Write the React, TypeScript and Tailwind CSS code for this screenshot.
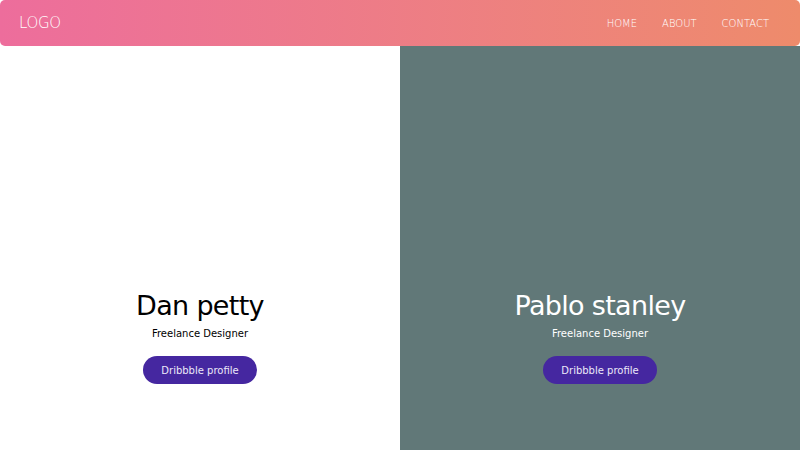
const font = { fontFamily: '"DejaVu Sans", "Open Sans", sans-serif' };

type Person = {
  name: string;
  title: string;
  dark: boolean;
};

const people: Person[] = [
  { name: "Dan petty", title: "Freelance Designer", dark: false },
  { name: "Pablo stanley", title: "Freelance Designer", dark: true },
];

function Header() {
  return (
    <header className="flex h-[46px] items-center justify-between rounded-[5px] bg-gradient-to-r from-[#ed6d9c] to-[#ee8b6b] pl-[19px] pr-[31px] text-white">
      <span className="text-[15px] font-light tracking-tight">LOGO</span>
      <nav className="flex items-center gap-[25px] text-[10px] font-light">
        <a href="#">HOME</a>
        <a href="#">ABOUT</a>
        <a href="#">CONTACT</a>
      </nav>
    </header>
  );
}

function Panel({ person }: { person: Person }) {
  const bg = person.dark ? "bg-[#617878] text-white" : "bg-white text-black";
  return (
    <section className={`flex flex-1 flex-col items-center justify-end pb-[66px] ${bg}`}>
      <h1 className="text-[27px] leading-[36px] tracking-tight">{person.name}</h1>
      <p className="mt-[2px] text-[10px] leading-[16px] font-medium">{person.title}</p>
      <button className="mt-[14px] h-[28px] w-[114px] rounded-full bg-[#4527a0] text-[10px] text-[#ece8f8]">
        Dribbble profile
      </button>
    </section>
  );
}

export default function App() {
  return (
    <div className="flex h-[450px] w-[800px] flex-col bg-white" style={font}>
      <Header />
      <main className="flex flex-1">
        {people.map((p) => (
          <Panel key={p.name} person={p} />
        ))}
      </main>
    </div>
  );
}
